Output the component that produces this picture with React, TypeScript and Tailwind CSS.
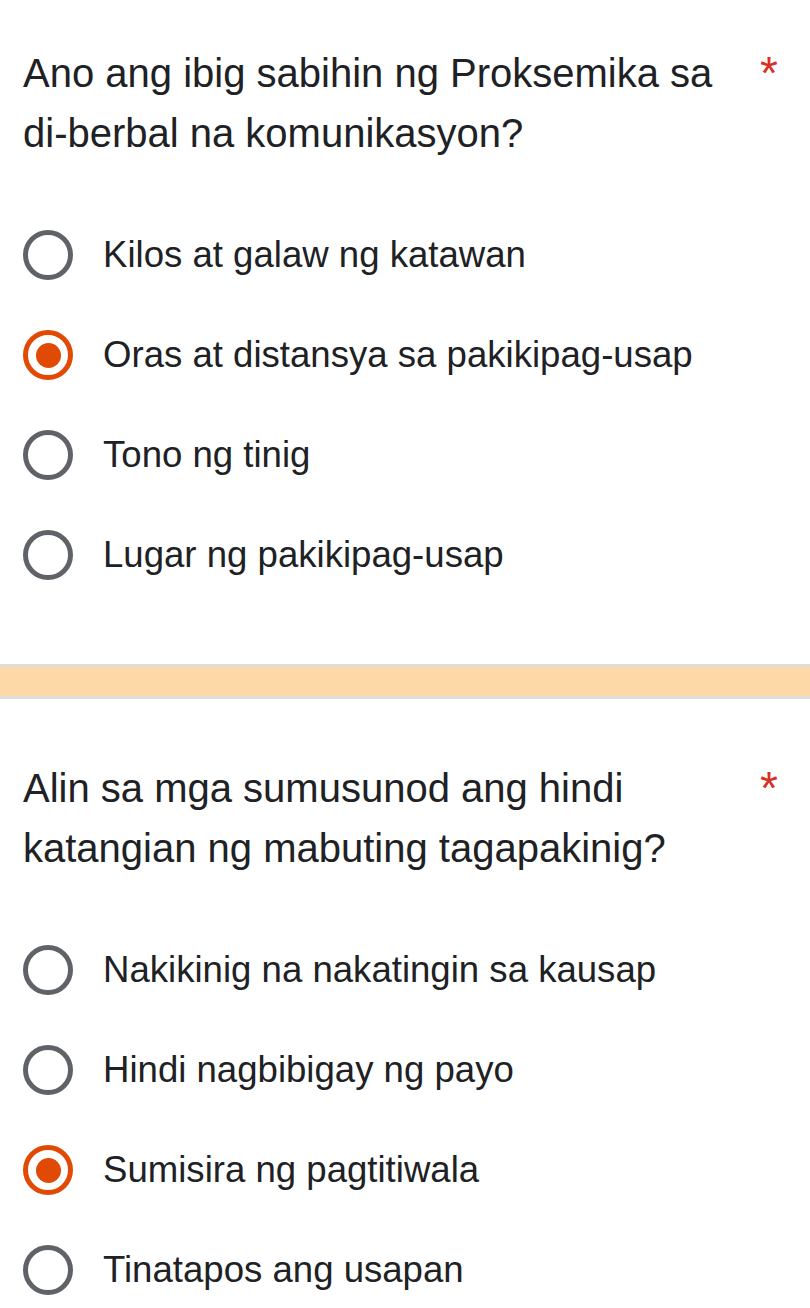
const questions = [
  {
    title: "Ano ang ibig sabihin ng Proksemika sa di-berbal na komunikasyon?",
    options: [
      "Kilos at galaw ng katawan",
      "Oras at distansya sa pakikipag-usap",
      "Tono ng tinig",
      "Lugar ng pakikipag-usap",
    ],
    selected: 1,
  },
  {
    title: "Alin sa mga sumusunod ang hindi katangian ng mabuting tagapakinig?",
    options: [
      "Nakikinig na nakatingin sa kausap",
      "Hindi nagbibigay ng payo",
      "Sumisira ng pagtitiwala",
      "Tinatapos ang usapan",
    ],
    selected: 2,
  },
];

function Radio({ checked }: { checked: boolean }) {
  if (checked) {
    return (
      <div className="flex h-[50px] w-[50px] shrink-0 items-center justify-center rounded-full border-[5px] border-[#e04a04]">
        <div className="h-[25px] w-[25px] rounded-full bg-[#e04a04]" />
      </div>
    );
  }
  return (
    <div className="h-[50px] w-[50px] shrink-0 rounded-full border-[5px] border-[#5f6368]" />
  );
}

function Question({
  title,
  options,
  selected,
}: {
  title: string;
  options: string[];
  selected: number;
}) {
  return (
    <section className="pl-[23px]">
      <div className="flex items-start">
        <h2 className="w-[715px] text-[40px] leading-[60px] text-[#202124]">
          {title}
        </h2>
        <span className="ml-auto mr-[32px] text-[46px] leading-[60px] text-[#d93025]">
          *
        </span>
      </div>
      <div className="mt-[42px] flex flex-col">
        {options.map((opt, i) => (
          <label key={opt} className="flex h-[100px] items-center gap-[30px]">
            <Radio checked={i === selected} />
            <span className="text-[36.6px] text-[#202124]">{opt}</span>
          </label>
        ))}
      </div>
    </section>
  );
}

export default function App() {
  return (
    <main
      className="min-h-screen w-[810px] overflow-hidden bg-white pt-[43px]"
      style={{ fontFamily: "'Liberation Sans', Arial, sans-serif" }}
    >
      <Question {...questions[0]} />
      <div className="mt-[59px] h-[35px] border-y-[3px] border-[#dedcdc] bg-[#fdd9a7]" />
      <div className="pt-[59px]">
        <Question {...questions[1]} />
      </div>
    </main>
  );
}
